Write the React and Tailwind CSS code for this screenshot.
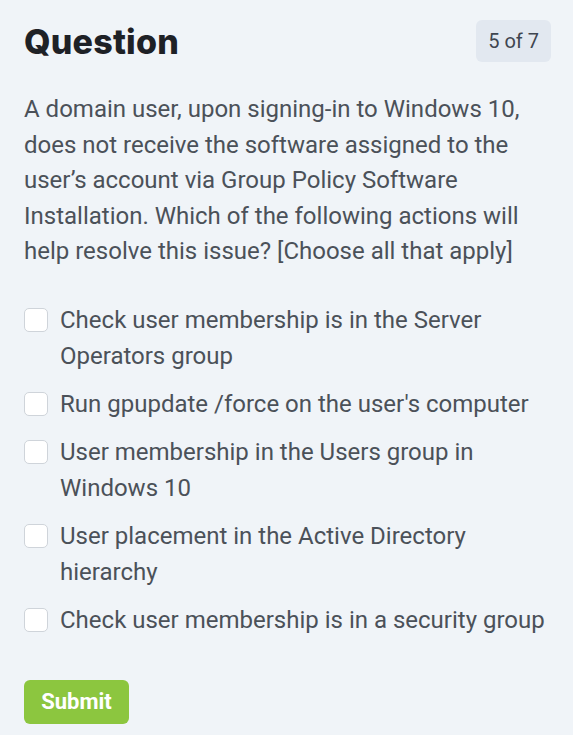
import { useState } from "react";

const options = [
  "Check user membership is in the Server Operators group",
  "Run gpupdate /force on the user's computer",
  "User membership in the Users group in Windows 10",
  "User placement in the Active Directory hierarchy",
  "Check user membership is in a security group",
];

const App = () => {
  const [checked, setChecked] = useState([]);

  const toggle = (i) =>
    setChecked((prev) => (prev.includes(i) ? prev.filter((x) => x !== i) : [...prev, i]));

  return (
    <div className="min-h-screen bg-[#f0f4f8] pl-6 pr-[22px] pt-5 pb-6 font-['Roboto',sans-serif]">
      <div className="flex items-center justify-between h-[42px]">
        <h1 className="text-[34px] font-extrabold text-[#1e2126] font-['Inter',sans-serif] tracking-[0.2px]">
          Question
        </h1>
        <span className="h-[42px] px-3 flex items-center rounded-md bg-[#e2e8f0] text-[20px] text-[#3f4650]">
          5 of 7
        </span>
      </div>

      <p className="mt-[30px] text-[24px] leading-[35.5px] text-[#4b5159]">
        A domain user, upon signing-in to Windows 10, does not receive the software assigned to the
        user’s account via Group Policy Software Installation. Which of the following actions will
        help resolve this issue? [Choose all that apply]
      </p>

      <div className="mt-8 flex flex-col gap-3">
        {options.map((opt, i) => (
          <label key={i} className="flex items-start gap-3 cursor-pointer">
            <span className="h-9 flex items-center shrink-0">
              <span
                onClick={() => toggle(i)}
                className={
                  checked.includes(i)
                    ? "w-6 h-6 rounded-[5px] border border-[#8dc63f] bg-[#8dc63f]"
                    : "w-6 h-6 rounded-[5px] border border-[#cfd4da] bg-white"
                }
              />
            </span>
            <span className="text-[24px] leading-9 text-[#4b5159]">{opt}</span>
          </label>
        ))}
      </div>

      <button className="mt-[42px] w-[105px] h-11 rounded-md bg-[#8cc63f] text-white text-[22px] font-bold">
        Submit
      </button>
    </div>
  );
};

export default App;
